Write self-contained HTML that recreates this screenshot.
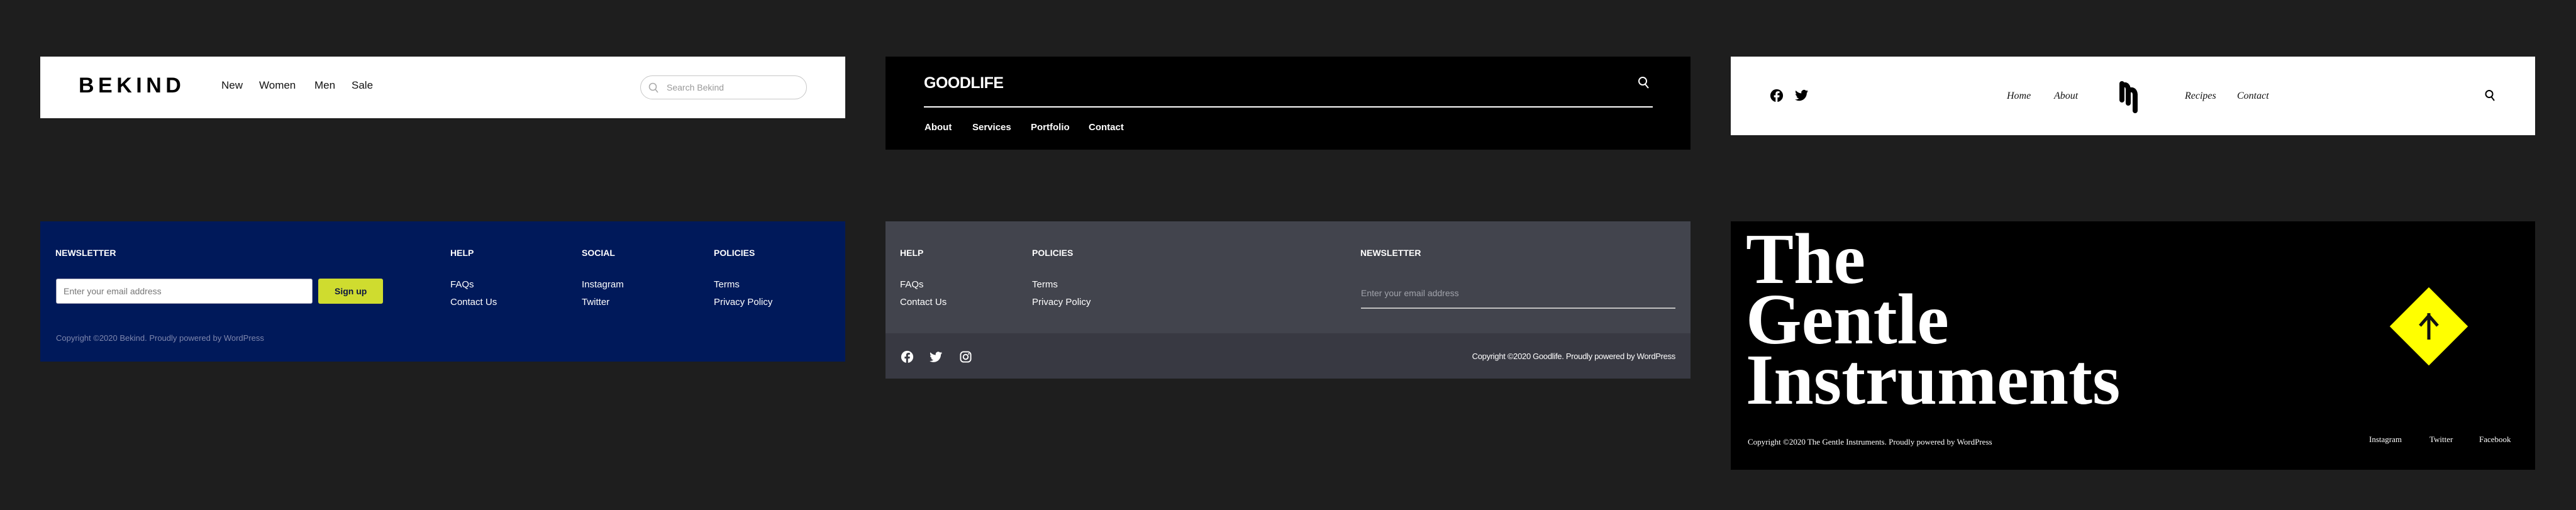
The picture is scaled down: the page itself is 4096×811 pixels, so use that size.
<!DOCTYPE html>
<html><head><meta charset="utf-8"><style>
*{margin:0;padding:0;box-sizing:border-box}
body{width:4096px;height:811px;background:#1e1e1e;position:relative;overflow:hidden;font-family:"Liberation Sans",sans-serif}
.a{position:absolute;white-space:nowrap}
.p{position:absolute}
</style></head><body>

<!-- Panel 1 header -->
<div class="p" style="left:64px;top:90px;width:1280px;height:98px;background:#fff">
  <div class="a" style="left:61px;top:27px;font-size:34px;font-weight:bold;letter-spacing:6.5px;color:#000">BEKIND</div>
  <div class="a" style="left:288px;top:36px;font-size:17px;color:#111">New</div>
  <div class="a" style="left:348px;top:36px;font-size:17px;color:#111">Women</div>
  <div class="a" style="left:436px;top:36px;font-size:17px;color:#111">Men</div>
  <div class="a" style="left:495px;top:36px;font-size:17px;color:#111">Sale</div>
  <div class="p" style="left:954px;top:30px;width:265px;height:38px;border:1.5px solid #c8c8c8;border-radius:19px">
    <svg class="p" style="left:11px;top:9px" width="20" height="20" viewBox="0 0 20 20"><circle cx="8" cy="8" r="5.5" fill="none" stroke="#aaa" stroke-width="1.6"/><path d="M12 12l4 5" stroke="#aaa" stroke-width="1.6"/></svg>
    <div class="a" style="left:41px;top:10px;font-size:14px;color:#999">Search Bekind</div>
  </div>
</div>

<!-- Panel 2 header -->
<div class="p" style="left:1408px;top:90px;width:1280px;height:148px;background:#000">
  <div class="a" style="left:61px;top:28px;font-size:25px;font-weight:bold;color:#fff;letter-spacing:-0.5px">GOODLIFE</div>
  <svg class="p" style="left:1196px;top:31px" width="22" height="22" viewBox="0 0 22 22"><circle cx="8" cy="8" r="6" fill="none" stroke="#fff" stroke-width="2"/><path d="M12 13l5 6" stroke="#fff" stroke-width="2"/></svg>
  <div class="p" style="left:61px;top:79px;width:1159px;height:2px;background:#fff"></div>
  <div class="a" style="left:62px;top:104px;font-size:15px;font-weight:bold;color:#fff">About</div>
  <div class="a" style="left:138px;top:104px;font-size:15px;font-weight:bold;color:#fff">Services</div>
  <div class="a" style="left:231px;top:104px;font-size:15px;font-weight:bold;color:#fff">Portfolio</div>
  <div class="a" style="left:323px;top:104px;font-size:15px;font-weight:bold;color:#fff">Contact</div>
</div>

<!-- Panel 3 header -->
<div class="p" style="left:2752px;top:90px;width:1279px;height:125px;background:#fff">
  <svg class="p" style="left:62px;top:51px" width="22" height="22" viewBox="0 0 24 24"><circle cx="12" cy="12" r="11" fill="#000"/><path d="M13.5 24V15h3l.5-3.5h-3.5V9.5c0-1 .3-1.7 1.8-1.7H17V4.7c-.3 0-1.4-.2-2.6-.2-2.6 0-4.3 1.6-4.3 4.4v2.6H7.3V15h2.8v9z" fill="#fff"/></svg>
  <svg class="p" style="left:102px;top:52px" width="22" height="20" viewBox="0 0 24 20"><path d="M23 2.3c-.8.4-1.8.6-2.7.7 1-.6 1.7-1.5 2-2.6-.9.6-1.9 1-3 1.2A4.7 4.7 0 0 0 11.3 6C7.4 5.8 4 4 1.7 1.1a4.7 4.7 0 0 0 1.5 6.3c-.8 0-1.5-.2-2.1-.6 0 2.3 1.6 4.2 3.8 4.6-.7.2-1.4.2-2.1.1.6 1.9 2.3 3.2 4.4 3.3A9.4 9.4 0 0 1 0 16.7 13.3 13.3 0 0 0 7.2 19c8.7 0 13.4-7.2 13.4-13.4v-.6c.9-.7 1.7-1.5 2.4-2.7z" fill="#000"/></svg>
  <div class="a" style="left:439px;top:54px;font-size:16px;font-style:italic;font-family:'Liberation Serif',serif;color:#111">Home</div>
  <div class="a" style="left:514px;top:54px;font-size:16px;font-style:italic;font-family:'Liberation Serif',serif;color:#111">About</div>
  <svg class="p" style="left:614px;top:38px" width="50" height="54" viewBox="0 0 50 54"><path d="M8 5v26 M8 8q9-4 10 6v22 M18 16q10-4 11 6v26" fill="none" stroke="#000" stroke-width="8" stroke-linecap="round"/></svg>
  <div class="a" style="left:722px;top:54px;font-size:16px;font-style:italic;font-family:'Liberation Serif',serif;color:#111">Recipes</div>
  <div class="a" style="left:805px;top:54px;font-size:16px;font-style:italic;font-family:'Liberation Serif',serif;color:#111">Contact</div>
  <svg class="p" style="left:1198px;top:52px" width="20" height="20" viewBox="0 0 20 20"><circle cx="8" cy="7.5" r="5.5" fill="none" stroke="#000" stroke-width="2"/><path d="M11.5 12l4.5 6" stroke="#000" stroke-width="2"/></svg>
</div>

<!-- Panel 1 footer -->
<div class="p" style="left:64px;top:352px;width:1280px;height:223px;background:#00195a;color:#fff">
  <div class="a" style="left:24px;top:42px;font-size:14px;font-weight:bold">NEWSLETTER</div>
  <div class="a" style="left:652px;top:42px;font-size:14px;font-weight:bold">HELP</div>
  <div class="a" style="left:861px;top:42px;font-size:14px;font-weight:bold">SOCIAL</div>
  <div class="a" style="left:1071px;top:42px;font-size:14px;font-weight:bold">POLICIES</div>
  <div class="p" style="left:25px;top:91px;width:408px;height:40px;background:#fff;border:1px solid #aab;border-radius:3px"></div>
  <div class="a" style="left:37px;top:103px;font-size:14px;color:#777">Enter your email address</div>
  <div class="p" style="left:442px;top:91px;width:103px;height:40px;background:#cfdc2f;border-radius:3px"></div>
  <div class="a" style="left:468px;top:103px;font-size:14px;font-weight:bold;color:#0b1540">Sign up</div>
  <div class="a" style="left:652px;top:92px;font-size:15px">FAQs</div>
  <div class="a" style="left:652px;top:120px;font-size:15px">Contact Us</div>
  <div class="a" style="left:861px;top:92px;font-size:15px">Instagram</div>
  <div class="a" style="left:861px;top:120px;font-size:15px">Twitter</div>
  <div class="a" style="left:1071px;top:92px;font-size:15px">Terms</div>
  <div class="a" style="left:1071px;top:120px;font-size:15px">Privacy Policy</div>
  <div class="a" style="left:25px;top:178px;font-size:13px;color:#7d86ad">Copyright ©2020 Bekind. Proudly powered by WordPress</div>
</div>

<!-- Panel 2 footer -->
<div class="p" style="left:1408px;top:352px;width:1280px;height:250px;background:#42444d;color:#fff">
  <div class="a" style="left:23px;top:42px;font-size:14px;font-weight:bold">HELP</div>
  <div class="a" style="left:233px;top:42px;font-size:14px;font-weight:bold">POLICIES</div>
  <div class="a" style="left:755px;top:42px;font-size:14px;font-weight:bold">NEWSLETTER</div>
  <div class="a" style="left:23px;top:92px;font-size:15px">FAQs</div>
  <div class="a" style="left:23px;top:120px;font-size:15px">Contact Us</div>
  <div class="a" style="left:233px;top:92px;font-size:15px">Terms</div>
  <div class="a" style="left:233px;top:120px;font-size:15px">Privacy Policy</div>
  <div class="a" style="left:756px;top:106px;font-size:14px;color:#a0a2aa">Enter your email address</div>
  <div class="p" style="left:756px;top:137px;width:500px;height:2px;background:#c0c0c0"></div>
  <div class="p" style="left:0;top:178px;width:1280px;height:72px;background:#383942"></div>
  <svg class="p" style="left:24px;top:205px" width="21" height="21" viewBox="0 0 24 24"><circle cx="12" cy="12" r="11" fill="#fff"/><path d="M13.5 24V15h3l.5-3.5h-3.5V9.5c0-1 .3-1.7 1.8-1.7H17V4.7c-.3 0-1.4-.2-2.6-.2-2.6 0-4.3 1.6-4.3 4.4v2.6H7.3V15h2.8v9z" fill="#383942"/></svg>
  <svg class="p" style="left:70px;top:207px" width="21" height="18" viewBox="0 0 24 20"><path d="M23 2.3c-.8.4-1.8.6-2.7.7 1-.6 1.7-1.5 2-2.6-.9.6-1.9 1-3 1.2A4.7 4.7 0 0 0 11.3 6C7.4 5.8 4 4 1.7 1.1a4.7 4.7 0 0 0 1.5 6.3c-.8 0-1.5-.2-2.1-.6 0 2.3 1.6 4.2 3.8 4.6-.7.2-1.4.2-2.1.1.6 1.9 2.3 3.2 4.4 3.3A9.4 9.4 0 0 1 0 16.7 13.3 13.3 0 0 0 7.2 19c8.7 0 13.4-7.2 13.4-13.4v-.6c.9-.7 1.7-1.5 2.4-2.7z" fill="#fff"/></svg>
  <svg class="p" style="left:118px;top:206px" width="19" height="19" viewBox="0 0 20 20"><rect x="1.5" y="1.5" width="17" height="17" rx="5" fill="none" stroke="#fff" stroke-width="2"/><circle cx="10" cy="10" r="4" fill="none" stroke="#fff" stroke-width="2"/><circle cx="15" cy="5" r="1.2" fill="#fff"/></svg>
  <div class="a" style="right:24px;top:207px;font-size:13px;letter-spacing:-0.3px">Copyright ©2020 Goodlife. Proudly powered by WordPress</div>
</div>

<!-- Panel 3 footer -->
<div class="p" style="left:2752px;top:352px;width:1279px;height:395px;background:#000;color:#fff">
  <div class="a" style="left:24px;top:12px;font-family:'Liberation Serif',serif;font-weight:bold;font-size:114px;line-height:96px;letter-spacing:0px;white-space:normal;width:700px">The<br>Gentle<br>Instruments</div>
  <div class="p" style="left:1066px;top:123px;width:88px;height:88px;background:#ff0;transform:rotate(45deg)"></div>
  <svg class="p" style="left:1088px;top:144px" width="44" height="48" viewBox="0 0 44 48"><path d="M22 2v42 M8 22L22 6l14 16" fill="none" stroke="#111" stroke-width="5"/></svg>
  <div class="a" style="left:27px;top:343px;font-family:'Liberation Serif',serif;font-size:13px">Copyright ©2020 The Gentle Instruments. Proudly powered by WordPress</div>
  <div class="a" style="left:1015px;top:339px;font-family:'Liberation Serif',serif;font-size:13px">Instagram</div>
  <div class="a" style="left:1111px;top:339px;font-family:'Liberation Serif',serif;font-size:13px">Twitter</div>
  <div class="a" style="left:1190px;top:339px;font-family:'Liberation Serif',serif;font-size:13px">Facebook</div>
</div>

</body></html>
